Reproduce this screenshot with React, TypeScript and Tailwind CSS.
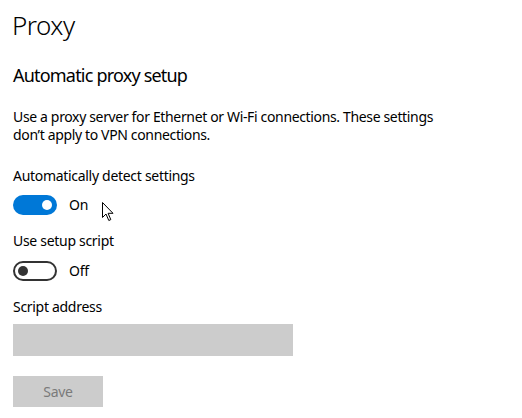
import React, { useState } from 'react';

function Toggle({ on, onClick }: { on: boolean; onClick: () => void }) {
  return (
    <button
      type="button"
      onClick={onClick}
      className={`relative w-[44px] h-[20px] rounded-full box-border flex items-center ${
        on ? 'bg-[#0078d7] justify-end pr-[5px]' : 'border-2 border-[#333333] bg-white justify-start pl-[3px]'
      }`}
    >
      <span className={`block w-[10px] h-[10px] rounded-full ${on ? 'bg-white' : 'bg-[#333333]'}`} />
    </button>
  );
}

export default function App() {
  const [autoDetect, setAutoDetect] = useState(true);
  const [useScript, setUseScript] = useState(false);

  return (
    <div className="relative w-[522px] h-[418px] bg-white text-black px-[13px] font-['Noto_Sans',sans-serif] overflow-hidden">
      <h1 className="pt-[5px] -ml-[1px] text-[26px] leading-[40px] font-light tracking-[-0.5px]">Proxy</h1>

      <h2 className="mt-[16px] text-[18px] leading-[28px] tracking-[-0.8px]">Automatic proxy setup</h2>

      <p className="mt-[19px] text-[14px] leading-[18px] tracking-[-0.35px] w-[440px]">
        Use a proxy server for Ethernet or Wi-Fi connections. These settings don’t apply to VPN connections.
      </p>

      <div className="mt-[23px] text-[14px] leading-[18px] tracking-[-0.3px]">Automatically detect settings</div>
      <div className="mt-[10px] flex items-center h-[20px] gap-[12px]">
        <Toggle on={autoDetect} onClick={() => setAutoDetect(!autoDetect)} />
        <span className="text-[14px] leading-[18px] tracking-[-0.3px]">{autoDetect ? 'On' : 'Off'}</span>
      </div>

      <div className="mt-[17px] text-[14px] leading-[18px] tracking-[-0.3px]">Use setup script</div>
      <div className="mt-[11px] flex items-center h-[20px] gap-[12px]">
        <Toggle on={useScript} onClick={() => setUseScript(!useScript)} />
        <span className="text-[14px] leading-[18px] tracking-[-0.3px]">{useScript ? 'On' : 'Off'}</span>
      </div>

      <div className="mt-[17px] text-[14px] leading-[18px] tracking-[-0.3px]">Script address</div>
      <input
        disabled={!useScript}
        className="mt-[8px] block w-[280px] h-[32px] bg-[#cccccc] outline-none px-2 text-[14px]"
      />

      <button
        type="button"
        disabled={!useScript}
        className="mt-[20px] block w-[90px] h-[31px] bg-[#cccccc] text-[#7a7a7a] text-[14px] tracking-[-0.3px]"
      >
        Save
      </button>

      {/* mouse pointer */}
      <svg className="absolute left-[102px] top-[202px]" width="13" height="20" viewBox="0 0 13 20">
        <path
          d="M0.5 0.5 L0.5 15.5 L4 12 L6.8 18.5 L8.8 17.6 L6.1 11.3 L11 11.3 Z"
          fill="white"
          stroke="black"
          strokeWidth="1"
          strokeLinejoin="miter"
        />
      </svg>
    </div>
  );
}
